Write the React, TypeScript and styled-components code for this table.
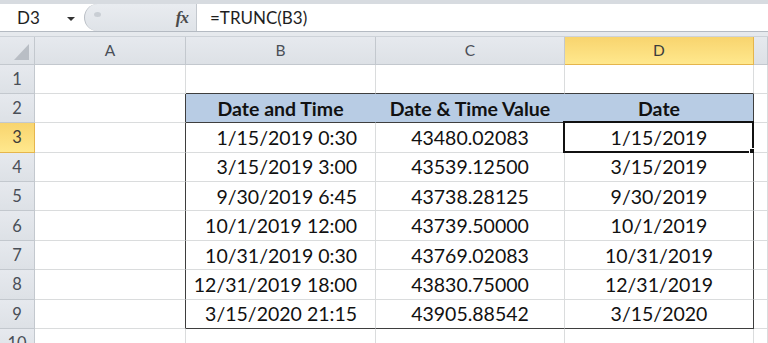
import React from 'react';
import styled, { createGlobalStyle } from 'styled-components';

const GlobalStyle = createGlobalStyle`
  html, body {
    margin: 0;
    padding: 0;
    background: #ffffff;
    overflow: hidden;
  }
  body {
    font-family: 'Lato', 'Open Sans', sans-serif;
  }
`;

const GRID_LINE = '#dadcdd';
const HEAD_LINE = '#c3c8ce';
const TABLE_LINE = '#3e3e3e';
const HEAD_FILL = '#b8cce4';

const Sheet = styled.div`
  width: 768px;
  height: 343px;
  overflow: hidden;
  display: flex;
  flex-direction: column;
`;

const FormulaBar = styled.div`
  flex-shrink: 0;
  display: flex;
  height: 27px;
  border-top: 4px solid #d7dbe0;
  border-bottom: 1px solid #b4bac2;
  background: #ffffff;
`;

const NameBox = styled.div`
  width: 84px;
  display: flex;
  align-items: center;
  justify-content: space-between;
  padding: 0 9px 0 17px;
  box-sizing: border-box;
  font-size: 17px;
  color: #1e1e1e;
`;

const DropArrow = styled.span`
  width: 0;
  height: 0;
  border-left: 4px solid transparent;
  border-right: 4px solid transparent;
  border-top: 4px solid #333;
  margin-top: 2px;
`;

const ButtonStrip = styled.div`
  width: 113px;
  display: flex;
  align-items: center;
  justify-content: space-between;
  padding: 0 8px 0 9px;
  box-sizing: border-box;
  background: linear-gradient(#e9ecf0, #dfe3e8);
  border-radius: 14px 0 0 14px;
  border-left: 1px solid #b9bec5;
  border-right: 1px solid #c3c8ce;
`;

const Knob = styled.span`
  width: 7px;
  height: 5px;
  border-radius: 50%;
  background: #c9ced4;
  margin-top: -6px;
`;

const FxLabel = styled.span`
  font-family: 'Liberation Serif', serif;
  font-style: italic;
  font-weight: bold;
  font-size: 17px;
  color: #4a4a4a;
  letter-spacing: -1px;
`;

const FormulaInput = styled.div`
  flex: 1;
  display: flex;
  align-items: center;
  padding-left: 13px;
  font-size: 17px;
  color: #1e1e1e;
`;

const Band = styled.div`
  flex-shrink: 0;
  height: 4px;
  background: #e6e9ed;
  border-bottom: 1px solid #cdd2d8;
`;

const Grid = styled.div`
  flex-shrink: 0;
  display: grid;
  grid-template-columns: 35px 151px 190px 189px 189px 1fr;
  grid-template-rows: 27.5px;
  grid-auto-rows: 29.4px;
`;

const Header = styled.div<{ $active?: boolean }>`
  display: flex;
  align-items: center;
  justify-content: center;
  box-sizing: border-box;
  font-size: 15.5px;
  color: ${(p) => (p.$active ? '#3c3c3c' : '#4a4f57')};
  background: ${(p) =>
    p.$active ? 'linear-gradient(#f8d46e, #ffe88d)' : 'linear-gradient(#e6e9ee, #dde1e6)'};
  border-right: 1px solid ${(p) => (p.$active ? '#e5b54c' : HEAD_LINE)};
  border-bottom: 1px solid ${(p) => (p.$active ? '#e5b54c' : HEAD_LINE)};
`;

const RowHeader = styled(Header)`
  font-size: 16.5px;
`;

const Corner = styled(Header)`
  position: relative;
  &::after {
    content: '';
    position: absolute;
    right: 5px;
    bottom: 4px;
    width: 0;
    height: 0;
    border-left: 15px solid transparent;
    border-bottom: 16px solid #b9bec5;
  }
`;

const Cell = styled.div<{
  $right?: string;
  $bottom?: string;
  $fill?: string;
  $align?: 'left' | 'center' | 'right';
  $bold?: boolean;
}>`
  position: relative;
  display: flex;
  align-items: center;
  justify-content: ${(p) =>
    p.$align === 'right' ? 'flex-end' : p.$align === 'center' ? 'center' : 'flex-start'};
  padding-right: ${(p) => (p.$align === 'right' ? '18px' : '0')};
  box-sizing: border-box;
  font-size: 19.5px;
  font-weight: ${(p) => (p.$bold ? 700 : 400)};
  color: #111111;
  white-space: nowrap;
  background: ${(p) => p.$fill || '#ffffff'};
  border-right: 1px solid ${(p) => p.$right || GRID_LINE};
  border-bottom: 1px solid ${(p) => p.$bottom || GRID_LINE};
`;

const Selection = styled.div`
  position: absolute;
  left: -2px;
  top: -2px;
  right: -1px;
  bottom: -1px;
  border: 2px solid #111111;
  pointer-events: none;
`;

const FillHandle = styled.div`
  position: absolute;
  right: -4px;
  bottom: -4px;
  width: 5px;
  height: 5px;
  background: #111111;
  border: 1px solid #ffffff;
`;

const columns = ['A', 'B', 'C', 'D', ''];

const rows: [string, string, string][] = [
  ['1/15/2019 0:30', '43480.02083', '1/15/2019'],
  ['3/15/2019 3:00', '43539.12500', '3/15/2019'],
  ['9/30/2019 6:45', '43738.28125', '9/30/2019'],
  ['10/1/2019 12:00', '43739.50000', '10/1/2019'],
  ['10/31/2019 0:30', '43769.02083', '10/31/2019'],
  ['12/31/2019 18:00', '43830.75000', '12/31/2019'],
  ['3/15/2020 21:15', '43905.88542', '3/15/2020'],
];

const EmptyRow = ({ n, tableBelow }: { n: number; tableBelow?: boolean }) => (
  <>
    <RowHeader>{n}</RowHeader>
    <Cell />
    <Cell $bottom={tableBelow ? TABLE_LINE : undefined} />
    <Cell $bottom={tableBelow ? TABLE_LINE : undefined} />
    <Cell $bottom={tableBelow ? TABLE_LINE : undefined} />
    <Cell />
  </>
);

export default function App() {
  return (
    <Sheet>
      <GlobalStyle />
      <FormulaBar>
        <NameBox>
          D3
          <DropArrow />
        </NameBox>
        <ButtonStrip>
          <Knob />
          <FxLabel>fx</FxLabel>
        </ButtonStrip>
        <FormulaInput>=TRUNC(B3)</FormulaInput>
      </FormulaBar>
      <Band />
      <Grid>
        <Corner />
        {columns.map((c) => (
          <Header key={c || 'E'} $active={c === 'D'}>
            {c}
          </Header>
        ))}

        <EmptyRow n={1} tableBelow />

        <RowHeader>2</RowHeader>
        <Cell $right={TABLE_LINE} />
        <Cell $fill={HEAD_FILL} $right={HEAD_FILL} $bottom={TABLE_LINE} $align="center" $bold>
          Date and Time
        </Cell>
        <Cell $fill={HEAD_FILL} $right={HEAD_FILL} $bottom={TABLE_LINE} $align="center" $bold>
          Date &amp; Time Value
        </Cell>
        <Cell $fill={HEAD_FILL} $right={TABLE_LINE} $bottom={TABLE_LINE} $align="center" $bold>
          Date
        </Cell>
        <Cell />

        {rows.map(([dt, value, date], i) => {
          const last = i === rows.length - 1;
          const bottom = last ? TABLE_LINE : undefined;
          return (
            <React.Fragment key={dt}>
              <RowHeader $active={i === 0}>{i + 3}</RowHeader>
              <Cell $right={TABLE_LINE} />
              <Cell $bottom={bottom} $align="right">
                {dt}
              </Cell>
              <Cell $bottom={bottom} $align="center">
                {value}
              </Cell>
              <Cell $bottom={bottom} $right={TABLE_LINE} $align="center">
                {date}
                {i === 0 && (
                  <Selection>
                    <FillHandle />
                  </Selection>
                )}
              </Cell>
              <Cell />
            </React.Fragment>
          );
        })}

        <EmptyRow n={10} />
      </Grid>
    </Sheet>
  );
}
